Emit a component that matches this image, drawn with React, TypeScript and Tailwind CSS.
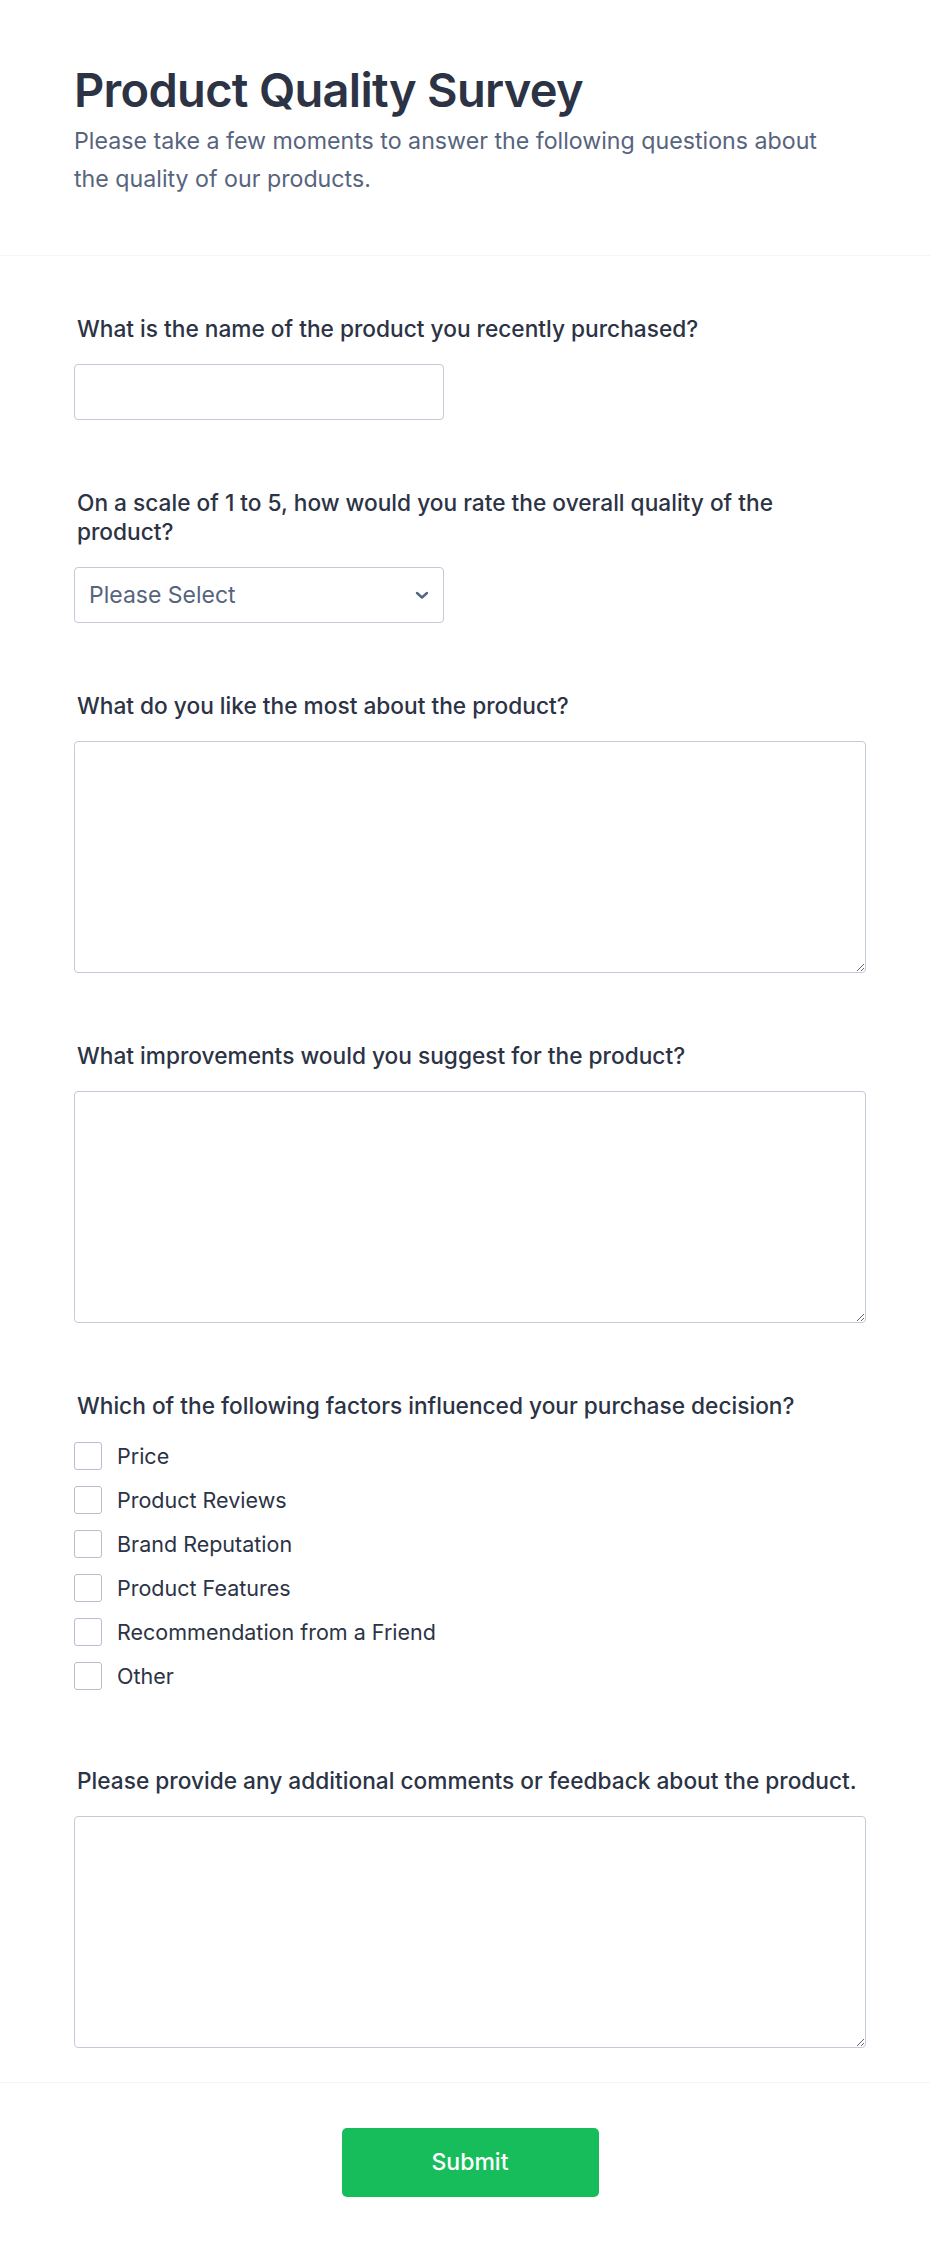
const factors = [
  "Price",
  "Product Reviews",
  "Brand Reputation",
  "Product Features",
  "Recommendation from a Friend",
  "Other",
];

function Label({
  children,
  nowrap = false,
}: {
  children: React.ReactNode;
  nowrap?: boolean;
}) {
  return (
    <label
      className={
        nowrap
          ? "block pl-[3px] text-[22.7px] leading-[29px] font-medium whitespace-nowrap text-[#2c3345]"
          : "block pl-[3px] text-[22.7px] leading-[29px] font-medium text-[#2c3345]"
      }
    >
      {children}
    </label>
  );
}

function TextArea() {
  return (
    <textarea className="mt-[21px] block h-[232px] w-[792px] rounded-[4px] border border-[#c3cad8] bg-white px-3 py-2 text-[18px] text-[#2c3345] outline-none" />
  );
}

export default function App() {
  return (
    <div className="min-h-[2253px] bg-white font-['Inter',sans-serif] text-[#2c3345]">
      {/* Header */}
      <header className="border-b border-[#f3f3fe] px-[74px] pt-[61px] pb-[57px]">
        <h1 className="text-[47px] leading-[58px] font-semibold tracking-[-0.7px] text-[#2c3345]">
          Product Quality Survey
        </h1>
        <p className="mt-[3px] max-w-[770px] text-[23.2px] leading-[38px] text-[#57647e]">
          Please take a few moments to answer the following questions about
          the quality of our products.
        </p>
      </header>

      {/* Questions */}
      <form className="flex flex-col gap-[68px] px-[74px] pt-[58px] pb-[34px]">
        <div>
          <Label>What is the name of the product you recently purchased?</Label>
          <input
            type="text"
            className="mt-[21px] block h-[56px] w-[370px] rounded-[4px] border border-[#c3cad8] bg-white px-3 text-[18px] outline-none"
          />
        </div>

        <div>
          <Label>
            On a scale of 1 to 5, how would you rate the overall quality of the
            product?
          </Label>
          <div className="relative mt-[21px] h-[56px] w-[370px]">
            <select className="block h-full w-full appearance-none rounded-[4px] border border-[#c3cad8] bg-white pl-[14px] text-[23px] text-[#57647e] outline-none">
              <option>Please Select</option>
              <option>1</option>
              <option>2</option>
              <option>3</option>
              <option>4</option>
              <option>5</option>
            </select>
            <svg
              className="pointer-events-none absolute top-[24px] right-[15px]"
              width="14"
              height="9"
              viewBox="0 0 14 9"
              fill="none"
            >
              <path
                d="M2 2l5 4.5L12 2"
                stroke="#57647e"
                strokeWidth="2.4"
                strokeLinecap="round"
                strokeLinejoin="round"
              />
            </svg>
          </div>
        </div>

        <div>
          <Label>What do you like the most about the product?</Label>
          <TextArea />
        </div>

        <div>
          <Label>What improvements would you suggest for the product?</Label>
          <TextArea />
        </div>

        <div>
          <Label>Which of the following factors influenced your purchase decision?</Label>
          <div className="mt-[14px] flex flex-col">
            {factors.map((f) => (
              <label key={f} className="flex h-[44px] items-center gap-[15px]">
                <span className="block h-[28px] w-[28px] rounded-[3px] border border-[#b8bfcc] bg-white" />
                <span className="text-[21.5px] leading-[28px] text-[#2c3345]">{f}</span>
              </label>
            ))}
          </div>
        </div>

        <div>
          <Label nowrap>
            Please provide any additional comments or feedback about the product.
          </Label>
          <TextArea />
        </div>
      </form>

      {/* Footer */}
      <div className="border-t border-[#f3f3fe] pt-[45px] pb-[56px]">
        <div className="ml-[74px] flex w-[792px] justify-center">
          <button
            type="button"
            className="h-[69px] w-[257px] rounded-[5px] bg-[#18bd5b] text-[23px] font-medium text-white"
          >
            Submit
          </button>
        </div>
      </div>
    </div>
  );
}
